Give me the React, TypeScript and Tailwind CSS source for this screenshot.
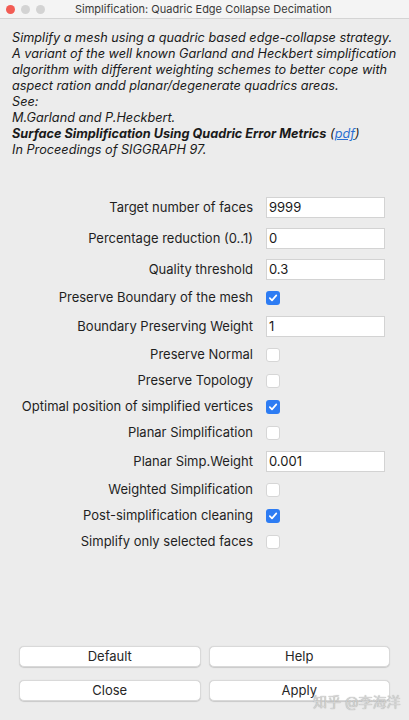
import React from "react";

type Row =
  | { kind: "input"; label: string; value: string }
  | { kind: "check"; label: string; checked: boolean };

const rows: Row[] = [
  { kind: "input", label: "Target number of faces", value: "9999" },
  { kind: "input", label: "Percentage reduction (0..1)", value: "0" },
  { kind: "input", label: "Quality threshold", value: "0.3" },
  { kind: "check", label: "Preserve Boundary of the mesh", checked: true },
  { kind: "input", label: "Boundary Preserving Weight", value: "1" },
  { kind: "check", label: "Preserve Normal", checked: false },
  { kind: "check", label: "Preserve Topology", checked: false },
  { kind: "check", label: "Optimal position of simplified vertices", checked: true },
  { kind: "check", label: "Planar Simplification", checked: false },
  { kind: "input", label: "Planar Simp.Weight", value: "0.001" },
  { kind: "check", label: "Weighted Simplification", checked: false },
  { kind: "check", label: "Post-simplification cleaning", checked: true },
  { kind: "check", label: "Simplify only selected faces", checked: false },
];

function CheckBox({ checked }: { checked: boolean }) {
  if (checked) {
    return (
      <div className="w-[14px] h-[14px] rounded-[3px] bg-[#2d7cf3] flex items-center justify-center">
        <svg width="10" height="10" viewBox="0 0 10 10">
          <path d="M1.8 5.2 L4 7.4 L8.3 2.4" stroke="white" strokeWidth="1.7" fill="none" strokeLinecap="round" strokeLinejoin="round" />
        </svg>
      </div>
    );
  }
  return <div className="w-[14px] h-[14px] rounded-[3px] bg-white border border-[#d6d6d6]" />;
}

function Btn({ label }: { label: string }) {
  return (
    <div className="flex-1 h-[21px] bg-white rounded-[5px] border border-[#d9d9d9] shadow-[0_0.5px_1px_rgba(0,0,0,0.15)] flex items-center justify-center text-[13px] text-[#262626]">
      {label}
    </div>
  );
}

export default function App() {
  return (
    <div
      className="relative w-[409px] h-[720px] bg-[#ececec] overflow-hidden flex flex-col"
      style={{ fontFamily: "Inter, 'Noto Sans', 'Noto Sans CJK SC', sans-serif" }}
    >
      {/* Title bar */}
      <div className="h-[19px] bg-[#f4f4f4] border-b border-[#d4d4d4] flex items-center relative shrink-0">
        <div className="flex items-center gap-[6px] pl-[6px]">
          <div className="w-[9px] h-[9px] rounded-full bg-[#f25c54]" />
          <div className="w-[9px] h-[9px] rounded-full bg-[#d3d3d3]" />
          <div className="w-[9px] h-[9px] rounded-full bg-[#d3d3d3]" />
        </div>
        <div className="absolute left-[75px] top-0 h-[19px] flex items-center text-[11px] text-[#3a3a3a]">
          Simplification: Quadric Edge Collapse Decimation
        </div>
      </div>

      {/* Description */}
      <div className="pl-[12px] pr-[4px] pt-[11px] text-[12.7px] leading-[16px] italic text-[#1a1a1a] whitespace-nowrap">
        <div>Simplify a mesh using a quadric based edge-collapse strategy.</div>
        <div>A variant of the well known Garland and Heckbert simplification</div>
        <div>algorithm with different weighting schemes to better cope with</div>
        <div>aspect ration andd planar/degenerate quadrics areas.</div>
        <div>See:</div>
        <div>M.Garland and P.Heckbert.</div>
        <div>
          <span className="font-bold">Surface Simplification Using Quadric Error Metrics</span>{" "}
          (<span className="text-[#2a6fd1] underline">pdf</span>)
        </div>
        <div>In Proceedings of SIGGRAPH 97.</div>
      </div>

      {/* Form */}
      <div className="mt-[34px] flex flex-col">
        {rows.map((r, i) => (
          <div key={i} className={`flex items-center ${r.kind === "input" ? "h-[31px]" : "h-[26px]"}`}>
            <div className="w-[266px] text-right text-[13px] text-[#1f1f1f] pr-[13px] whitespace-nowrap">
              {r.label}
            </div>
            {r.kind === "input" ? (
              <div className="w-[119px] h-[21px] bg-white border border-[#d3d3d3] flex items-center pl-[2px] text-[13px] text-[#1a1a1a]">
                {r.value}
              </div>
            ) : (
              <CheckBox checked={r.checked} />
            )}
          </div>
        ))}
      </div>

      <div className="flex-1" />

      {/* Buttons */}
      <div className="px-[19px] pb-[19px] flex flex-col gap-[13px]">
        <div className="flex gap-[8px]">
          <Btn label="Default" />
          <Btn label="Help" />
        </div>
        <div className="flex gap-[8px]">
          <Btn label="Close" />
          <Btn label="Apply" />
        </div>
      </div>

      {/* Watermark */}
      <div className="absolute left-[313px] top-[691px] text-[14px] text-[#d4d4d4] whitespace-nowrap" style={{ textShadow: "0 0 1px #9a9a9a" }}>
        知乎 @李海洋
      </div>
    </div>
  );
}
